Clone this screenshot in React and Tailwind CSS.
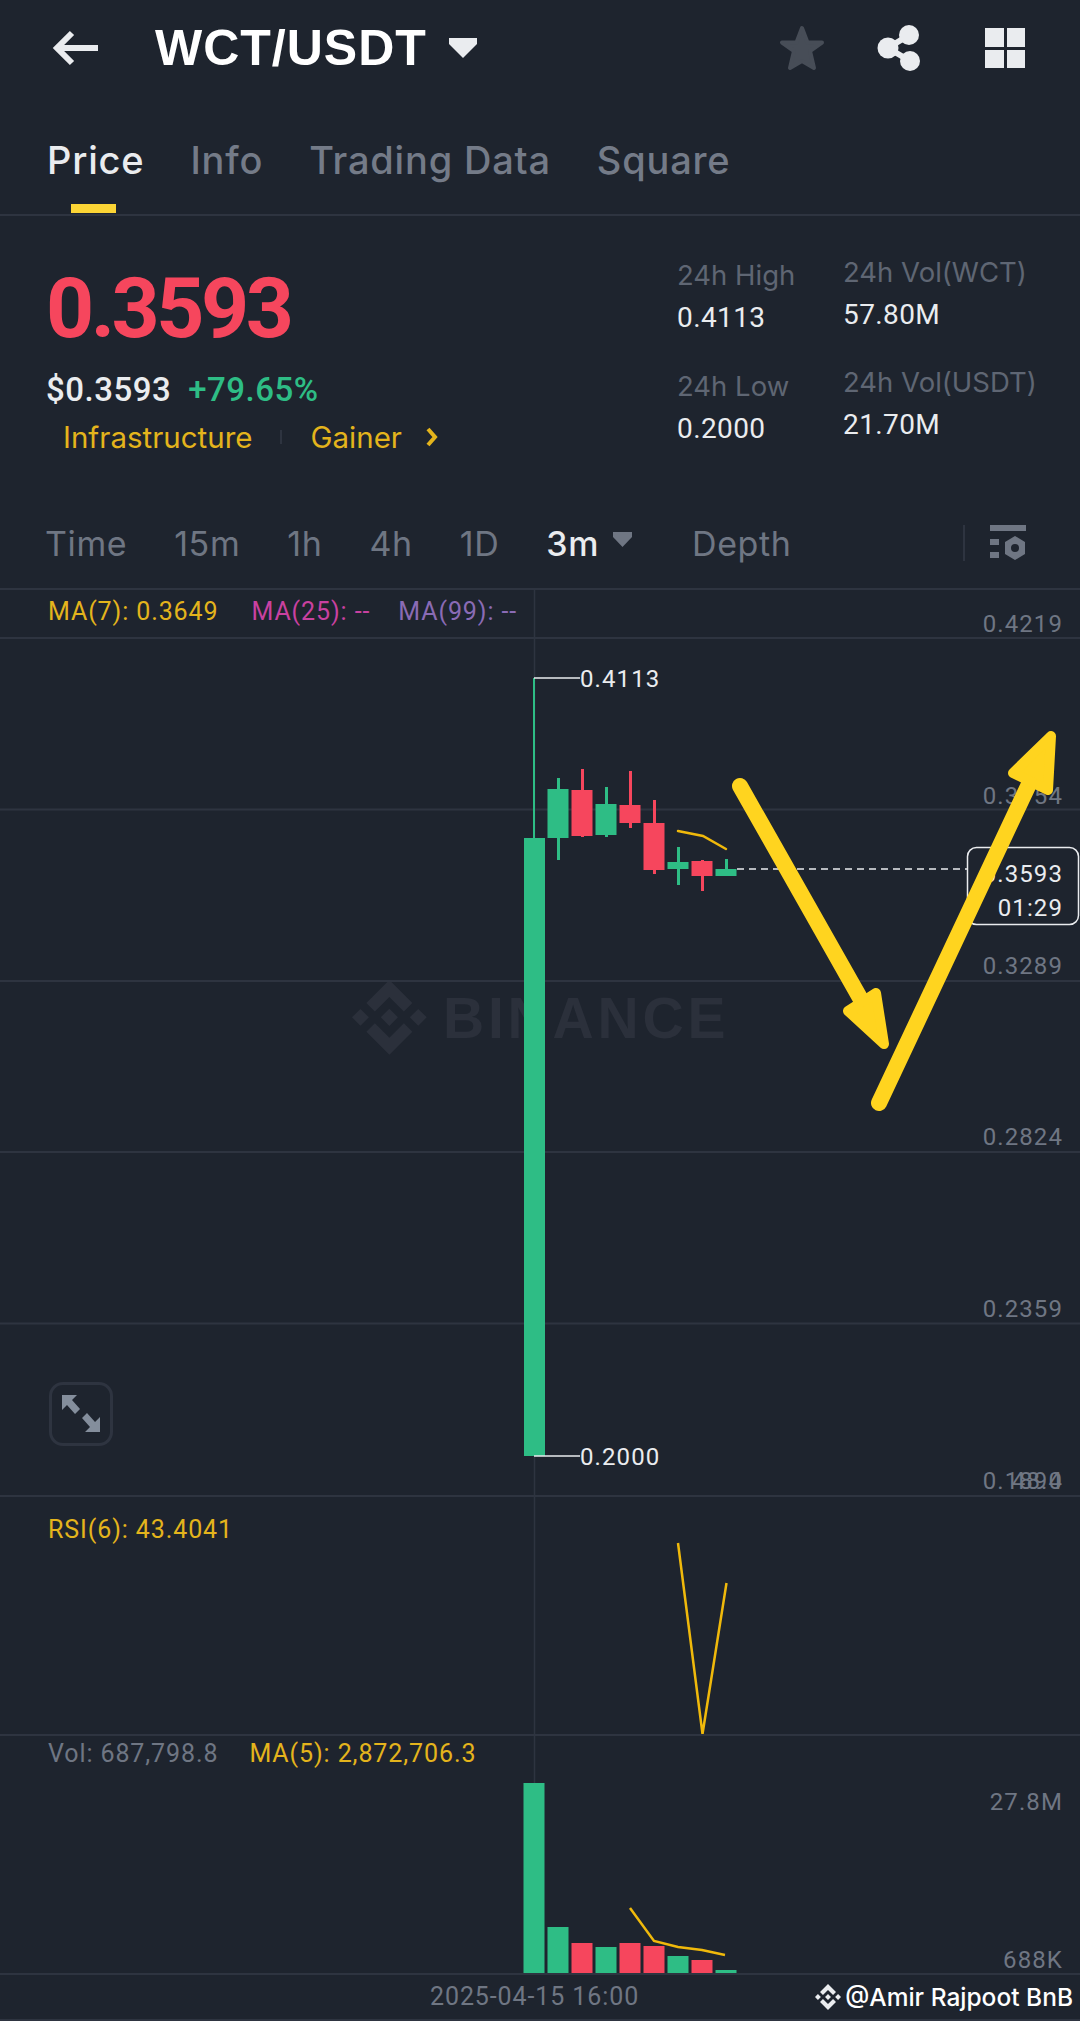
import React from 'react';

const BNB_PATH = 'M38.73 53.2l24.59-24.58 24.6 24.6 14.3-14.31L63.32 0 24.43 38.9zM0 63.31l14.3-14.31 14.31 14.31-14.31 14.3zM38.73 73.41l24.59 24.59 24.6-24.6 14.31 14.29-38.9 38.91-38.91-38.88zM98 63.31l14.3-14.31 14.31 14.3-14.31 14.32zM77.83 63.3L63.32 48.78 52.59 59.51l-1.24 1.23-2.54 2.54 14.51 14.5 14.51-14.47z';

const GREEN = '#2EBD85';
const RED = '#F6465D';

// x centre, body top/bottom, wick top/bottom
const candles = [
  { x: 558, top: 789, bottom: 838, high: 778, low: 860, up: true },
  { x: 582, top: 790, bottom: 836, high: 769, low: 837, up: false },
  { x: 606, top: 804, bottom: 835, high: 787, low: 837, up: true },
  { x: 630, top: 805, bottom: 823, high: 771, low: 828, up: false },
  { x: 654, top: 823, bottom: 870, high: 800, low: 874, up: false },
  { x: 678, top: 862, bottom: 869, high: 847, low: 885, up: true },
  { x: 702, top: 861, bottom: 876, high: 860, low: 891, up: false },
  { x: 726, top: 869, bottom: 876, high: 859, low: 876, up: true },
];

const volumes = [
  { x: 534, top: 1783, up: true },
  { x: 558, top: 1927, up: true },
  { x: 582, top: 1943, up: false },
  { x: 606, top: 1947, up: true },
  { x: 630, top: 1943, up: false },
  { x: 654, top: 1946, up: false },
  { x: 678, top: 1956, up: true },
  { x: 702, top: 1960, up: false },
  { x: 726, top: 1970, up: true },
];

const gridLines = [638, 809.5, 981, 1152, 1323.5];
const axisLabels = [
  { y: 623, text: '0.4219' },
  { y: 795, text: '0.3754' },
  { y: 965, text: '0.3289' },
  { y: 1136, text: '0.2824' },
  { y: 1308, text: '0.2359' },
  { y: 1480, text: '0.1894' },
  { y: 1480, text: '48.0' },
  { y: 1801, text: '27.8M' },
  { y: 1959, text: '688K' },
];

const ChartDrawing = () => (
  <svg
    className="absolute inset-0 h-full w-full"
    viewBox="0 588 1080 1433"
    fontFamily="Roboto, sans-serif"
  >
    {/* watermark */}
    <g transform="translate(352 980) scale(0.59)" fill="#2b303b">
      <path d={BNB_PATH} />
    </g>
    <text x="443" y="1038" fontFamily="Liberation Sans, sans-serif" fontWeight="700" fontSize="57" letterSpacing="3.8" fill="#2b303b">BINANCE</text>

    {gridLines.map((y) => (
      <line key={y} x1="0" x2="1080" y1={y} y2={y} stroke="#2E3440" strokeWidth="2" />
    ))}
    <line x1="534.5" x2="534.5" y1="588" y2="1975" stroke="#2E3440" strokeWidth="1.5" />

    {axisLabels.map((l) => (
      <text key={l.text} x="1063" y={l.y + 8.5} textAnchor="end" fontSize="24" letterSpacing="1.1" fill="#6f7683">{l.text}</text>
    ))}

    {/* main candle */}
    <line x1="534" x2="534" y1="678" y2="838" stroke={GREEN} strokeWidth="2" />
    <rect x="524" y="838" width="21" height="618" fill={GREEN} />
    <polyline points="534,678 580,678" fill="none" stroke="#EAECEF" strokeWidth="1.5" />
    <polyline points="534,1456 580,1456" fill="none" stroke="#EAECEF" strokeWidth="1.5" />
    <text x="580" y="687" fontSize="24" letterSpacing="1.1" fill="#EAECEF">0.4113</text>
    <text x="580" y="1465" fontSize="24" letterSpacing="1.1" fill="#EAECEF">0.2000</text>

    {candles.map((c) => (
      <g key={c.x} fill={c.up ? GREEN : RED}>
        <rect x={c.x - 1} y={c.high} width="3" height={c.low - c.high} />
        <rect x={c.x - 10.5} y={c.top} width="21" height={c.bottom - c.top} />
      </g>
    ))}
    <polyline points="678,831 703,836 726,849" fill="none" stroke="#F0B90B" strokeWidth="2.500" strokeLinecap="round" />

    {/* last price */}
    <line x1="737" x2="967" y1="869" y2="869" stroke="#EAECEF" strokeWidth="1.5" strokeDasharray="7 5" />
    <rect x="967.5" y="847.5" width="111" height="77" rx="9" fill="#1E242E" stroke="#EAECEF" strokeWidth="1.5" />
    <text x="1063" y="882" textAnchor="end" fontSize="24" letterSpacing="1.1" fill="#EAECEF">0.3593</text>
    <text x="1063" y="916" textAnchor="end" fontSize="24" letterSpacing="1.1" fill="#EAECEF">01:29</text>

    {/* hand drawn arrows */}
    <g stroke="#FFD41F" fill="#FFD41F" strokeLinecap="round" strokeLinejoin="round">
      <line x1="740" y1="786" x2="868" y2="1012" strokeWidth="16" />
      <polygon points="876,993 848,1011 884,1044" strokeWidth="10" />
      <line x1="879" y1="1103" x2="1038" y2="765" strokeWidth="16" />
      <polygon points="1051,736 1013,773 1048,790" strokeWidth="10" />
    </g>

    {/* RSI */}
    <polyline points="678,1543 702.5,1734 726.5,1583" fill="none" stroke="#F0B90B" strokeWidth="2.500" />

    {/* volume */}
    {volumes.map((v) => (
      <rect key={v.x} x={v.x - 10.5} y={v.top} width="21" height={1975 - v.top} fill={v.up ? GREEN : RED} />
    ))}
    <polyline points="630,1908 654,1941 678,1947 702,1950 725,1955" fill="none" stroke="#F0B90B" strokeWidth="2.500" />
  </svg>
);

const StatBlock = ({ label, value, className }) => (
  <div className={className}>
    <div className="text-[27.5px] leading-[40px] whitespace-nowrap text-[#5f6673]">{label}</div>
    <div className="mt-[3px] font-['Roboto',sans-serif] text-[28px] leading-[40px] tracking-[0.4px] text-[#EAECEF]">{value}</div>
  </div>
);

export default function App() {
  return (
    <div className="flex h-[2021px] w-[1080px] flex-col overflow-hidden bg-[#1E242E] font-['Inter',sans-serif]">
      {/* top bar */}
      <div className="flex h-[96px] items-center pl-[52px]">
        <svg width="46" height="36" viewBox="0 0 46 36" fill="none" stroke="#EAECEF" strokeWidth="6">
          <path d="M46 18H5" />
          <path d="M20 3 5 18l15 15" />
        </svg>
        <span className="ml-[57px] font-['Liberation_Sans',sans-serif] text-[50px] leading-none font-bold tracking-[1px] text-white">WCT/USDT</span>
        <svg className="ml-[22px]" width="28" height="20" viewBox="0 0 28 20" fill="#EAECEF">
          <path d="M0 0h28v6L14 20 0 6z" />
        </svg>
        <svg className="ml-auto" width="46" height="46" viewBox="0 0 46 46" fill="#474D57" stroke="#474D57" strokeWidth="4" strokeLinejoin="round">
          <path d="M23 3l5.5 14.5H43L31 26l4 17-12-7-12 7 4-17L3 17.5h14.500z" />
        </svg>
        <svg className="ml-[52px]" width="44" height="46" viewBox="0 0 44 46" fill="#EAECEF" stroke="#EAECEF">
          <line x1="32" y1="10" x2="11" y2="23" strokeWidth="6" />
          <line x1="11" y1="23" x2="33" y2="36" strokeWidth="6" />
          <circle cx="32" cy="10" r="10" stroke="none" />
          <circle cx="11" cy="23" r="10.500" stroke="none" />
          <circle cx="33" cy="36" r="10" stroke="none" />
        </svg>
        <div className="mr-[55px] ml-[64px] grid h-[40px] w-[40px] grid-cols-2 gap-[3px]">
          <div className="bg-[#EAECEF]" />
          <div className="bg-[#EAECEF]" />
          <div className="bg-[#EAECEF]" />
          <div className="bg-[#EAECEF]" />
        </div>
      </div>

      {/* tabs */}
      <div className="flex h-[120px] gap-[46px] border-b-2 border-[#2E3440] pt-[42px] pl-[47px] text-[38px] leading-[44px] font-medium tracking-[0.8px] text-[#747B88]">
        <div className="flex flex-col text-[#EAECEF]">
          <span>Price</span>
          <div className="mt-[22px] ml-[24px] h-[9px] w-[45px] bg-[#FCD535]" />
        </div>
        <span>Info</span>
        <span>Trading Data</span>
        <span>Square</span>
      </div>

      {/* price and 24h stats */}
      <div className="flex h-[297px]">
        <div className="pt-[51px] pl-[46px]">
          <div className="font-['Roboto',sans-serif] text-[84px] leading-[84px] font-bold tracking-[-3.5px] text-[#F6465D]">0.3593</div>
          <div className="mt-[19px] flex gap-[17px] font-['Roboto',sans-serif] text-[33px] leading-[40px] font-medium tracking-[0.5px]">
            <span className="text-[#EAECEF]">$0.3593</span>
            <span className="text-[#2EBD85]">+79.65%</span>
          </div>
          <div className="mt-[7px] flex items-center pl-[17px] text-[29.5px] leading-[40px] text-[#E4B41C]">
            <span>Infrastructure</span>
            <div className="mx-[28px] h-[14px] w-[2px] bg-[#2E3440]" />
            <span>Gainer</span>
            <svg className="ml-[24px]" width="12" height="20" viewBox="0 0 12 20" fill="none" stroke="#E4B41C" strokeWidth="4">
              <path d="M2 2l7 8-7 8" />
            </svg>
          </div>
        </div>
        <div className="ml-auto flex pr-[41px]">
          <div className="w-[166px] pt-[39px]">
            <StatBlock label="24h High" value="0.4113" />
            <StatBlock className="mt-[28px]" label="24h Low" value="0.2000" />
          </div>
          <div className="w-[196px] pt-[36px]">
            <StatBlock label="24h Vol(WCT)" value="57.80M" />
            <StatBlock className="mt-[27px]" label="24h Vol(USDT)" value="21.70M" />
          </div>
        </div>
      </div>

      {/* interval row */}
      <div className="mb-[15px] flex h-[60px] items-center gap-[47px] pl-[45px] text-[34px] tracking-[0.6px] text-[#6f7683]">
        <span>Time</span>
        <span>15m</span>
        <span>1h</span>
        <span>4h</span>
        <span>1D</span>
        <div className="flex items-center gap-[14px] font-medium text-[#EAECEF]">
          <span>3m</span>
          <svg className="mb-[8px]" width="19" height="15" viewBox="0 0 19 15" fill="#6f7683">
            <path d="M0 0h19v5L9.500 15 0 5z" />
          </svg>
        </div>
        <span className="ml-[13px]">Depth</span>
        <div className="ml-auto h-[36px] w-[2px] bg-[#2E3440]" />
        <svg className="mr-[54px] ml-[-22px]" width="36" height="36" viewBox="0 0 36 36" fill="#6f7683">
          <rect x="0" y="0" width="36" height="6" />
          <rect x="0" y="14" width="9" height="6" />
          <rect x="0" y="27" width="9" height="6" />
          <path fillRule="evenodd" d="M25 11l10 6v12l-10 6-10-6V17zM25 19a4 4 0 100 8 4 4 0 000-8z" />
        </svg>
      </div>

      {/* chart */}
      <div className="relative flex flex-1 flex-col font-['Roboto',sans-serif] text-[25px] leading-[30px] tracking-[0.9px]">
        <ChartDrawing />
        <div className="relative h-[907px] border-t-2 border-[#2E3440] pt-[7px] pl-[48px]">
          <div className="flex">
            <span className="text-[#E4B41C]">MA(7): 0.3649</span>
            <span className="ml-[33px] text-[#C941A0]">MA(25): --</span>
            <span className="ml-[28px] text-[#8A6BB5]">MA(99): --</span>
          </div>
        </div>
        <div className="relative h-[239px] border-t-2 border-[#2E3440] pt-[18px] pl-[48px] text-[#E4B41C]">
          RSI(6): 43.4041
        </div>
        <div className="relative h-[241px] border-y-2 border-[#2E3440] pt-[3px] pl-[48px]">
          <div className="flex gap-[31px]">
            <span className="text-[#6f7683]">Vol: 687,798.8</span>
            <span className="text-[#E4B41C]">MA(5): 2,872,706.3</span>
          </div>
        </div>
        <div className="relative flex flex-1 items-center border-b-2 border-[#2E3440] pr-[7px] pl-[430px]">
          <span className="text-[#6f7683]">2025-04-15 16:00</span>
          <svg className="ml-auto" width="26" height="26" viewBox="0 0 126.61 126.61" fill="#EAECEF">
            <path d={BNB_PATH} />
          </svg>
          <span className="ml-[4px] font-['Inter',sans-serif] text-[24.5px] font-medium tracking-normal text-white">@Amir Rajpoot BnB</span>
        </div>
      </div>

      {/* expand button */}
      <div className="absolute top-[1382px] left-[49px] flex h-[64px] w-[64px] items-center justify-center rounded-[14px] border-[3px] border-[#2E3440]">
        <svg width="38" height="38" viewBox="0 0 38 38" fill="#848E9C">
          <path d="M0 0h15l-5 5 8 9-5 5-8-9-5 5zM38 37H23l5-5-8-9 5-5 8 9 5-5z" />
        </svg>
      </div>
    </div>
  );
}
